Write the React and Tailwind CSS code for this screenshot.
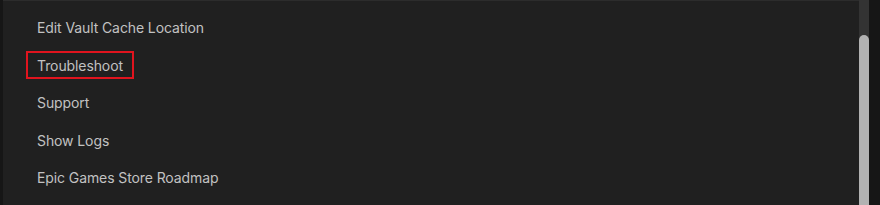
export default function App() {
  const items = [
    'Edit Vault Cache Location',
    'Troubleshoot',
    'Support',
    'Show Logs',
    'Epic Games Store Roadmap',
  ]

  return (
    <div className="flex h-[205px] w-[880px] overflow-hidden bg-[#202020]" style={{ fontFamily: 'Inter, "Noto Sans", sans-serif' }}>
      {/* Left edge */}
      <div className="w-[3px] bg-[#161616]" />

      {/* Menu list */}
      <div className="flex flex-1 flex-col border-t border-[#2c2c2c] pl-[23px] pt-[8px]">
        {items.map((item, i) => (
          <div key={item} className="flex h-[37.5px] items-center">
            <span
              className={
                i === 1
                  ? 'flex h-[28px] items-center border-2 border-[#e0141e] px-[9px] text-[14px] tracking-[-0.1px] text-[#c2c2c2]'
                  : 'flex h-[28px] items-center border-2 border-transparent px-[9px] text-[14px] tracking-[-0.1px] text-[#c2c2c2]'
              }
            >
              {item}
            </span>
          </div>
        ))}
      </div>

      {/* Scrollbar */}
      <div className="flex w-[10px] flex-col bg-[#333333]">
        <div className="h-[35px]" />
        <div className="flex-1 rounded-t-full bg-[#b2b2b2]" />
      </div>
      <div className="w-[11px] bg-[#161616]" />
    </div>
  )
}
